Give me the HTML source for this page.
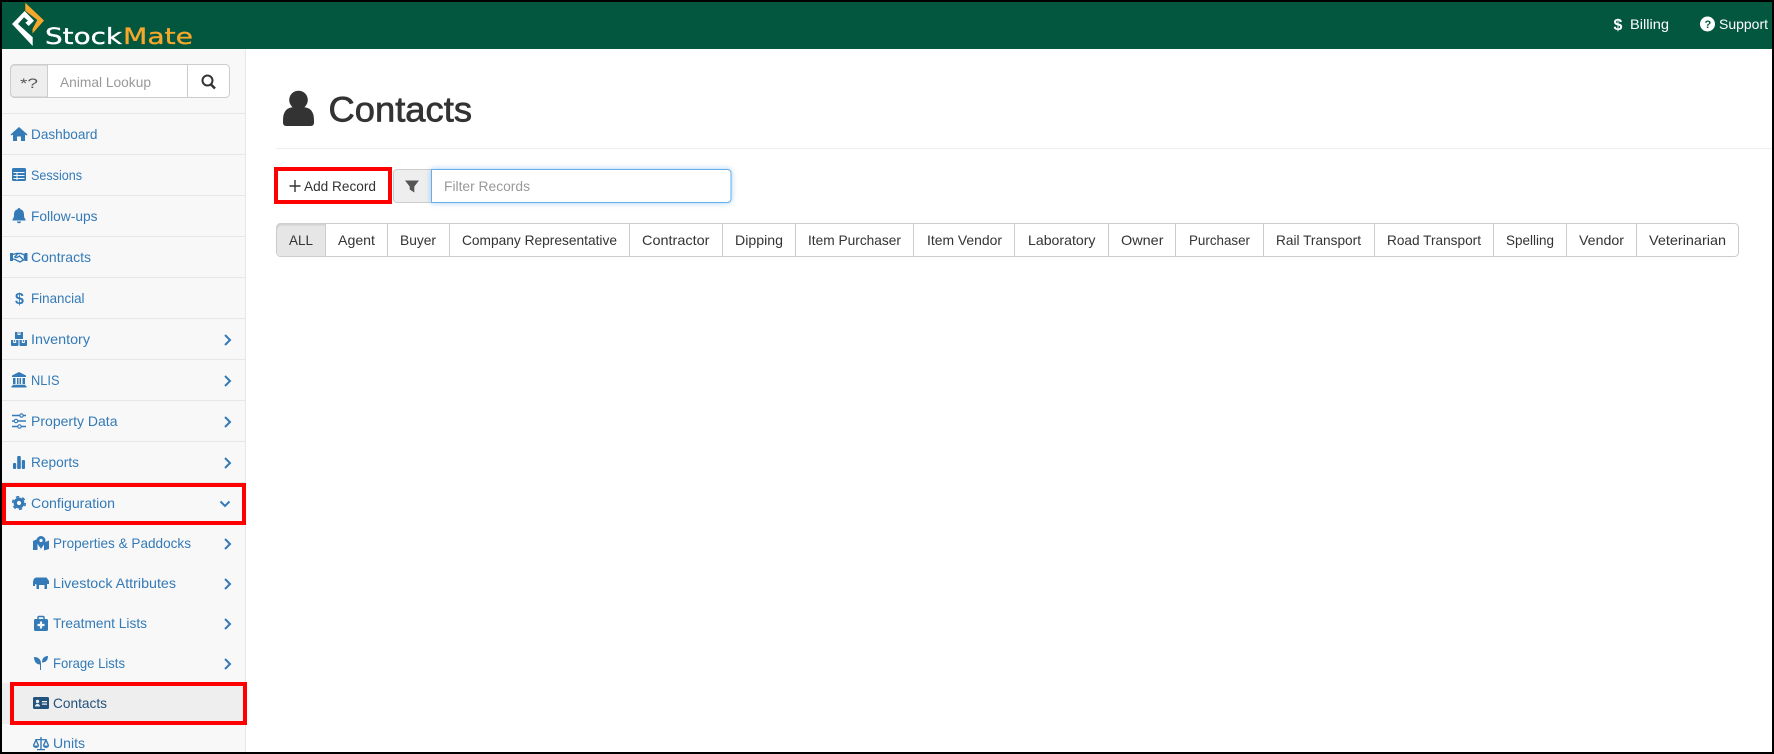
<!DOCTYPE html>
<html lang="en"><head><meta charset="utf-8"><title>StockMate Contacts</title>
<style>
html,body{margin:0;padding:0;width:1774px;height:754px;overflow:hidden;background:#000}
svg{display:block}
text{font-family:"Liberation Sans",sans-serif;font-size:14px}
.n{fill:#337ab7}.b{fill:#333}.p{fill:#999}.w{fill:#fff}
.i{fill:#337ab7}.s{fill:none;stroke:#337ab7;stroke-width:1.4}
.c{fill:none;stroke:#337ab7;stroke-width:2}
.l{stroke:#e7e7e7;stroke-width:1}
.t{stroke:#ccc;stroke-width:1}
</style></head><body>
<svg xmlns="http://www.w3.org/2000/svg" width="1774" height="754" viewBox="0 0 1774 754">
<rect x="2" y="2" width="1770" height="750" fill="#fff"/>
<!-- header -->
<rect x="2" y="2" width="1770" height="47" fill="#03573f"/>
<path d="M25.300 2.700L44 20.500L32.500 33.500V29L37.300 20L25.300 10.700Z" fill="#f6a82c"/>
<path d="M12 24L24.700 11L34 20.700L28.700 26L25.300 22.700L28 20.700L24 17.300L18 24L32.700 37.300V46Z" fill="#fff"/>
<text class="w" x="45" y="44" textLength="77" lengthAdjust="spacingAndGlyphs" style="font-size:22px;font-family:'DejaVu Sans',sans-serif;stroke:#fff;stroke-width:.3px">Stock</text>
<text x="123" y="44" textLength="70" lengthAdjust="spacingAndGlyphs" fill="#f6a82c" style="font-size:22px;font-family:'DejaVu Sans',sans-serif;stroke:#f6a82c;stroke-width:.3px">Mate</text>
<text class="w" x="1613.500" y="30" style="font-size:16px;font-weight:bold">$</text>
<text class="w" x="1630" y="29" textLength="39" lengthAdjust="spacingAndGlyphs">Billing</text>
<circle cx="1707.500" cy="24" r="7.500" fill="#fff"/>
<text x="1704.500" y="28" fill="#03573f" style="font-size:11px;font-weight:bold">?</text>
<text class="w" x="1719" y="29" textLength="49" lengthAdjust="spacingAndGlyphs">Support</text>
<!-- sidebar -->
<rect x="2" y="49" width="243" height="703" fill="#f8f8f8"/>
<rect x="245" y="49" width="1" height="703" fill="#e7e7e7"/>
<rect x="10.500" y="64.500" width="219" height="33" rx="4" fill="#fff" stroke="#ccc"/>
<path d="M47.500 65H14.500a4 4 0 0 0-4 4V93a4 4 0 0 0 4 4H47.500Z" fill="#eee" stroke="#ccc"/>
<line x1="187.500" y1="65" x2="187.500" y2="97" class="t"/>
<text x="20" y="88" fill="#555" textLength="18" lengthAdjust="spacingAndGlyphs">*?</text>
<text class="p" x="60" y="87" textLength="91" lengthAdjust="spacingAndGlyphs">Animal Lookup</text>
<circle cx="207.500" cy="80.500" r="5" fill="none" stroke="#333" stroke-width="2"/>
<path d="M211 84.500L215 88.500" stroke="#333" stroke-width="2.500" fill="none"/>
<g>
<line class="l" x1="2" x2="245" y1="113.500" y2="113.500"/><line class="l" x1="2" x2="245" y1="154.500" y2="154.500"/><line class="l" x1="2" x2="245" y1="195.500" y2="195.500"/><line class="l" x1="2" x2="245" y1="236.500" y2="236.500"/><line class="l" x1="2" x2="245" y1="277.500" y2="277.500"/><line class="l" x1="2" x2="245" y1="318.500" y2="318.500"/><line class="l" x1="2" x2="245" y1="359.500" y2="359.500"/><line class="l" x1="2" x2="245" y1="400.500" y2="400.500"/><line class="l" x1="2" x2="245" y1="441.500" y2="441.500"/><line class="l" x1="2" x2="245" y1="482.500" y2="482.500"/>
</g>
<rect x="2" y="683" width="243" height="41" fill="#eee"/>
<text class="n" x="31" y="139" textLength="66.500" lengthAdjust="spacingAndGlyphs">Dashboard</text>
<text class="n" x="31" y="180" textLength="51" lengthAdjust="spacingAndGlyphs">Sessions</text>
<text class="n" x="31" y="221" textLength="66.500" lengthAdjust="spacingAndGlyphs">Follow-ups</text>
<text class="n" x="31" y="262" textLength="60" lengthAdjust="spacingAndGlyphs">Contracts</text>
<text class="n" x="31" y="303" textLength="53.500" lengthAdjust="spacingAndGlyphs">Financial</text>
<text class="n" x="31" y="344" textLength="59" lengthAdjust="spacingAndGlyphs">Inventory</text>
<text class="n" x="31" y="385" textLength="28.500" lengthAdjust="spacingAndGlyphs">NLIS</text>
<text class="n" x="31" y="426" textLength="86.500" lengthAdjust="spacingAndGlyphs">Property Data</text>
<text class="n" x="31" y="467" textLength="48" lengthAdjust="spacingAndGlyphs">Reports</text>
<text class="n" x="31" y="508" textLength="84" lengthAdjust="spacingAndGlyphs">Configuration</text>
<text class="n" x="53" y="548" textLength="138" lengthAdjust="spacingAndGlyphs">Properties &amp; Paddocks</text>
<text class="n" x="53" y="588" textLength="123" lengthAdjust="spacingAndGlyphs">Livestock Attributes</text>
<text class="n" x="53" y="628" textLength="94" lengthAdjust="spacingAndGlyphs">Treatment Lists</text>
<text class="n" x="53" y="668" textLength="72" lengthAdjust="spacingAndGlyphs">Forage Lists</text>
<text x="53" y="708" textLength="54" lengthAdjust="spacingAndGlyphs" fill="#23527c">Contacts</text>
<text class="n" x="53" y="748" textLength="32" lengthAdjust="spacingAndGlyphs">Units</text>
<!-- chevrons -->
<path class="c" d="M225 335L230 340L225 345M225 376L230 381L225 386M225 417L230 422L225 427M225 458L230 463L225 468M225 539L230 544L225 549M225 579L230 584L225 589M225 619L230 624L225 629M225 659L230 664L225 669"/>
<path class="c" d="M220.500 501.500L225 506L229.500 501.500"/>
<!-- nav icons -->
<path class="i" d="M19 127L27.500 134.500L26.500 135.500L25 134.500V141H21V136.500H17V141H13V134.500L11.500 135.500L10.500 134.500Z"/>
<rect class="i" x="12" y="168" width="14" height="13" rx="1.500"/>
<path d="M13.500 172.500H24.500M13.500 175.500H24.500M13.500 178.500H24.500M17 172V180" stroke="#f8f8f8" stroke-width="1" fill="none"/>
<path class="i" d="M19 208a1.300 1.300 0 0 1 1.300 1.300C23.300 210 24 212.300 24 215c0 3 1 3.500 1.500 4.500v1H12.500v-1c.5-1 1.500-1.500 1.500-4.500 0-2.700.7-5 3.700-5.700A1.300 1.300 0 0 1 19 208z"/>
<path class="i" d="M17 221.500h4a2 1.800 0 0 1-4 0z"/>
<path class="i" d="M10 253h3v8h-3zM24.500 253h3v8h-3z"/>
<path class="s" d="M13 254.500L16.500 253.500H18L14.800 257C16 258.500 18 257 19.500 256L23.500 260L20 262L15 259.500L13 259M18 253.500H21L24.500 255V259.500"/>
<text class="n" x="15" y="304" style="font-size:16px;font-weight:bold">$</text>
<path class="i" d="M15 332h8v7h-8zM11 340h7.500v5a1 1 0 0 1-1 1H12a1 1 0 0 1-1-1zM19.500 340H27v5a1 1 0 0 1-1 1h-5.500a1 1 0 0 1-1-1z"/>
<path d="M18 332v2.500h2V332M13.700 340v2.500h2V340M22.300 340v2.500h2V340" stroke="#f8f8f8" stroke-width="1" fill="none"/>
<path class="i" d="M19 372L26 375.500V377H12V375.500ZM13 378h2.500v6H13zM17 378h1.500v6H17zM19.500 378H21v6h-1.500zM22.500 378H25v6h-2.500zM12.500 384.800h13V386h1v1.500H11.500V386h1z"/>
<path class="s" d="M12 415.500H26M12 421H26M12 426.500H26" stroke-width="1.200"/>
<circle cx="21.500" cy="415.500" r="1.700" fill="#f8f8f8" stroke="#337ab7" stroke-width="1.100"/>
<circle cx="16" cy="421" r="1.700" fill="#f8f8f8" stroke="#337ab7" stroke-width="1.100"/>
<circle cx="19.500" cy="426.500" r="1.700" fill="#f8f8f8" stroke="#337ab7" stroke-width="1.100"/>
<rect class="i" x="13" y="463" width="3.200" height="6" rx="1"/><rect class="i" x="17.200" y="456" width="3.600" height="13" rx="1"/><rect class="i" x="21.800" y="460" width="3.200" height="9" rx="1"/>
<circle class="i" cx="19" cy="503" r="5.400"/>
<circle cx="19" cy="503" r="6.300" fill="none" stroke="#337ab7" stroke-width="1.600" stroke-dasharray="3.300 3.300"/>
<circle cx="19" cy="503" r="2.100" fill="#f8f8f8"/>
<path class="i" d="M33 541L37.500 539V550L33 550ZM44 542.500L49 540.500V549L44 550.500Z"/>
<path class="i" d="M41 536a4.500 4.500 0 0 1 4.500 4.500C45.500 543.500 42 547 41 549 40 547 36.500 543.500 36.500 540.500A4.500 4.500 0 0 1 41 536z"/>
<circle cx="41" cy="540.500" r="1.600" fill="#f8f8f8"/>
<path class="i" d="M33 583c0-3 1-5.500 3.500-5.500H46.500L49 581V584H47V589H44.500V585H39V589H36.500V584.500L35 584V586H33Z"/>
<rect class="i" x="34" y="619" width="14" height="12" rx="1.500"/>
<path d="M38 619v-1.500a1 1 0 0 1 1-1h4a1 1 0 0 1 1 1V619" fill="none" stroke="#337ab7" stroke-width="1.500"/>
<path d="M41 621.500v7M37.500 625h7" stroke="#f8f8f8" stroke-width="2.200"/>
<path class="i" d="M34 657C38 657 41 659 41 663.500V670H40V664.500C36.500 664.500 34 661.500 34 657ZM48 656C48 660 46 662.500 42 662.500 42 658.500 44 656 48 656Z"/>
<rect x="33" y="697" width="16" height="12" rx="1.500" fill="#23527c"/>
<circle cx="37.500" cy="701.500" r="1.700" fill="#eee"/>
<path d="M35 706.500c0-1.500 1-2.500 2.500-2.500s2.500 1 2.500 2.500zM42 701h5v1.200h-5zM42 703.500h5v1.200h-5z" fill="#eee"/>
<path class="i" d="M40.300 737h1.400v2h5v1.300h-5V749H45v1.300H37V749h3.300V740.300h-5V739h5z"/>
<path class="s" stroke-width="1" d="M36 740L33.500 745.500M36 740L38.500 745.500M46 740L43.500 745.500M46 740L48.500 745.500"/>
<path class="i" d="M33 745.500h6a3 2.500 0 0 1-6 0zM43 745.500h6a3 2.500 0 0 1-6 0z"/>
<!-- red boxes -->
<rect x="4" y="485" width="240" height="38" fill="none" stroke="#f00" stroke-width="4"/>
<rect x="12" y="684" width="233" height="39" fill="none" stroke="#f00" stroke-width="4"/>
<!-- main -->
<circle cx="298.500" cy="100" r="9.300" fill="#333"/>
<path d="M283 123V120Q283 107 295 107H302Q314 107 314 120V123a3 3 0 0 1-3 3H286a3 3 0 0 1-3-3z" fill="#333"/>
<text class="b" x="328.500" y="121.500" textLength="143.500" lengthAdjust="spacingAndGlyphs" style="font-size:35px;stroke:#333;stroke-width:.7px">Contacts</text>
<rect x="276" y="148" width="1496" height="1" fill="#eee"/>
<rect x="276" y="169" width="116" height="34" fill="#fff"/>
<rect x="276" y="169" width="114" height="33" fill="none" stroke="#f00" stroke-width="4"/>
<path d="M295 180V192M289.500 186H300.500" stroke="#333" stroke-width="1.400"/>
<text class="b" x="304" y="191" textLength="72" lengthAdjust="spacingAndGlyphs">Add Record</text>
<path d="M393.500 173a3.500 3.500 0 0 1 3.500-3.500H431.500V202.500H397a3.500 3.500 0 0 1-3.500-3.500Z" fill="#eee" stroke="#ccc"/>
<path d="M405 180.500H419L414.300 186.500V192.500L409.700 189.500V186.500Z" fill="#555"/>
<path d="M431.500 169.500H727.500a3.500 3.500 0 0 1 3.500 3.500V199a3.500 3.500 0 0 1-3.500 3.500H431.500Z" fill="#fff" stroke="#66afe9" style="filter:drop-shadow(0 0 3px rgba(102,175,233,.6))"/>
<text class="p" x="444" y="191" textLength="86" lengthAdjust="spacingAndGlyphs">Filter Records</text>
<!-- filter buttons -->
<rect x="276.500" y="223.500" width="1462" height="33" rx="4" fill="#fff" stroke="#ccc"/>
<path d="M325.500 224H281a4 4 0 0 0-4 4V252a4 4 0 0 0 4 4H325.500Z" fill="#e6e6e6"/>
<path d="M325 224.500H281a4 4 0 0 0-4 4" fill="none" stroke="#d2d2d2" stroke-width="2"/>
<path class="t" d="M325.500 224V256M387.500 224V256M449.500 224V256M629.500 224V256M722.500 224V256M795.500 224V256M913.500 224V256M1014.500 224V256M1108.500 224V256M1175.500 224V256M1263.500 224V256M1374.500 224V256M1493.500 224V256M1566.500 224V256M1636.500 224V256"/>
<text class="b" x="289" y="245" textLength="24" lengthAdjust="spacingAndGlyphs">ALL</text>
<text class="b" x="338" y="245" textLength="37" lengthAdjust="spacingAndGlyphs">Agent</text>
<text class="b" x="400" y="245" textLength="36" lengthAdjust="spacingAndGlyphs">Buyer</text>
<text class="b" x="462" y="245" textLength="155" lengthAdjust="spacingAndGlyphs">Company Representative</text>
<text class="b" x="642" y="245" textLength="67.500" lengthAdjust="spacingAndGlyphs">Contractor</text>
<text class="b" x="735" y="245" textLength="48" lengthAdjust="spacingAndGlyphs">Dipping</text>
<text class="b" x="808" y="245" textLength="93" lengthAdjust="spacingAndGlyphs">Item Purchaser</text>
<text class="b" x="927" y="245" textLength="75" lengthAdjust="spacingAndGlyphs">Item Vendor</text>
<text class="b" x="1028" y="245" textLength="67.500" lengthAdjust="spacingAndGlyphs">Laboratory</text>
<text class="b" x="1121" y="245" textLength="42.500" lengthAdjust="spacingAndGlyphs">Owner</text>
<text class="b" x="1189" y="245" textLength="61" lengthAdjust="spacingAndGlyphs">Purchaser</text>
<text class="b" x="1276" y="245" textLength="85" lengthAdjust="spacingAndGlyphs">Rail Transport</text>
<text class="b" x="1387" y="245" textLength="94" lengthAdjust="spacingAndGlyphs">Road Transport</text>
<text class="b" x="1506" y="245" textLength="48" lengthAdjust="spacingAndGlyphs">Spelling</text>
<text class="b" x="1579" y="245" textLength="45" lengthAdjust="spacingAndGlyphs">Vendor</text>
<text class="b" x="1649" y="245" textLength="77" lengthAdjust="spacingAndGlyphs">Veterinarian</text>
</svg>
</body></html>
